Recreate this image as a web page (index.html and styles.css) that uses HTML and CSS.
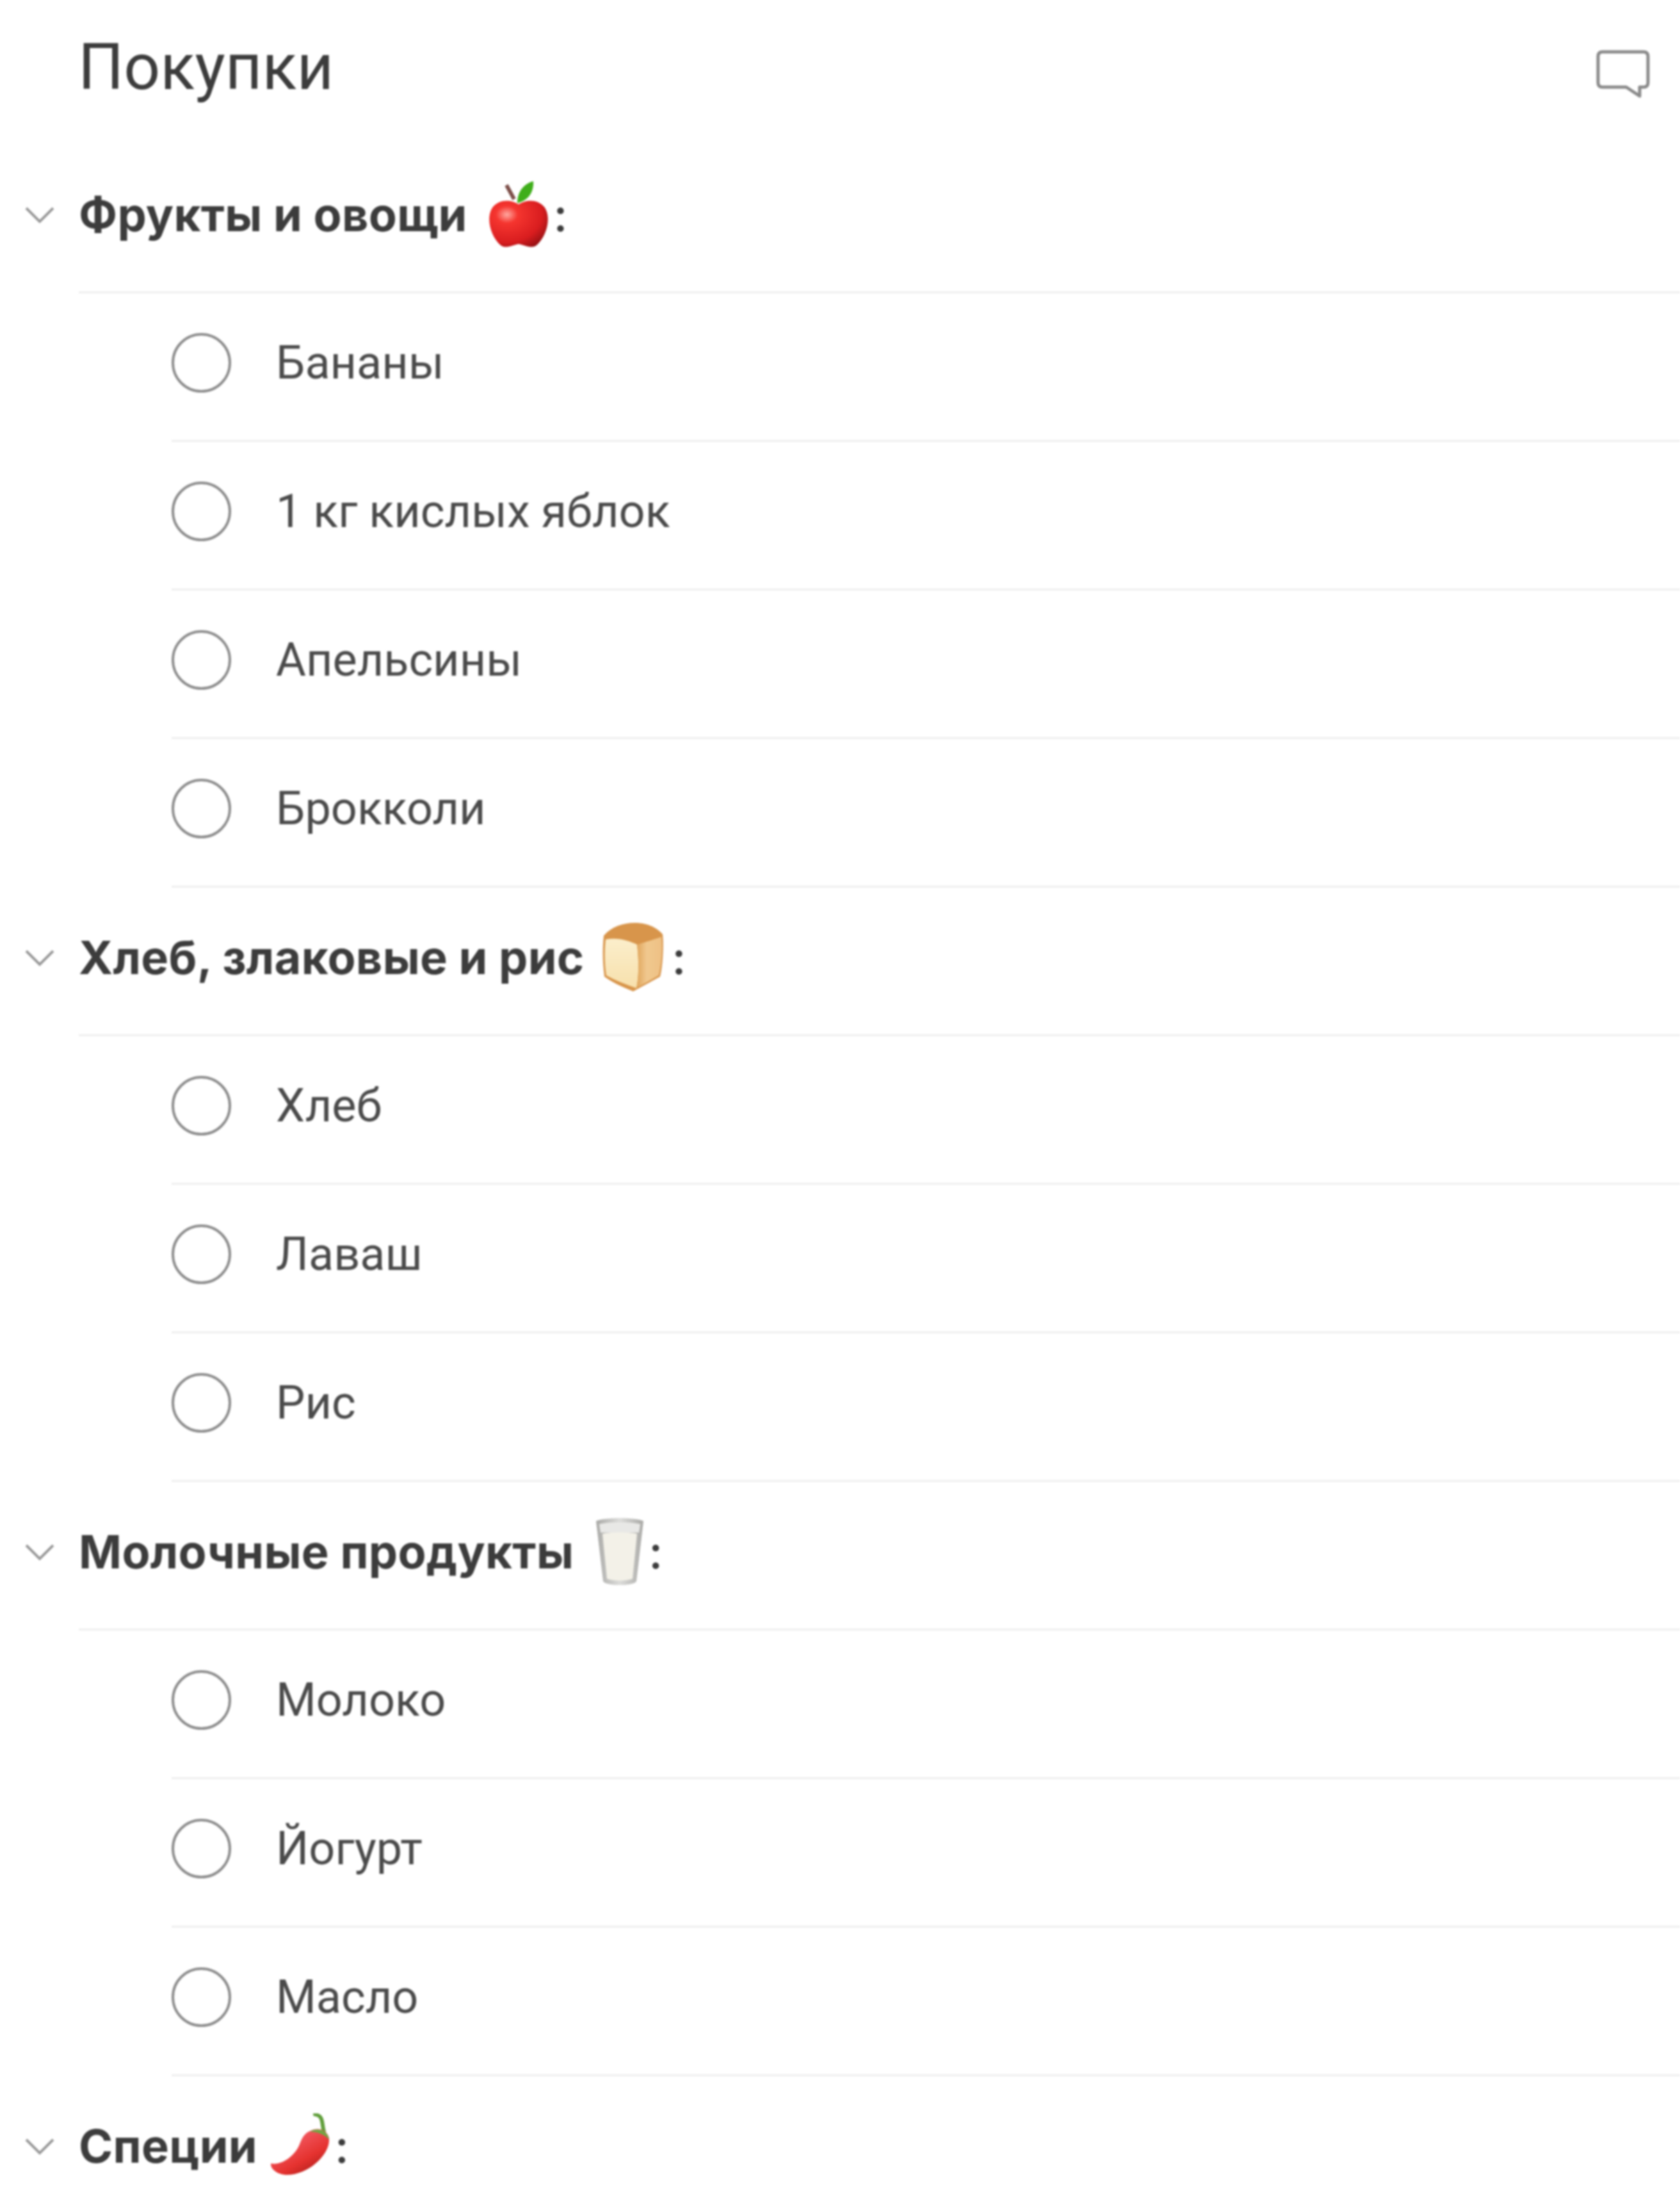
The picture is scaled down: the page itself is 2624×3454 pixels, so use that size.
FILE: index.html
```html
<!DOCTYPE html>
<html lang="ru">
<head>
<meta charset="utf-8">
<title>Покупки</title>
<link rel="stylesheet" href="styles.css">
</head>
<body>
<main class="page">
  <header class="top">
    <h1 class="title">Покупки</h1>
    <svg class="comment" viewBox="0 0 84 78"><path d="M10 3H74Q81 3 81 10V51Q81 58 74 58H68V72L47 58H10Q3 58 3 51V10Q3 3 10 3Z"/></svg>
  </header>

  <section>
    <div class="head">
      <svg class="chev" viewBox="0 0 48 28"><path d="M3 3L24 24L45 3"/></svg>
      <h2 class="head-text"><span class="head-name">Фрукты и овощи</span>
        <svg class="emoji apple" viewBox="0 0 96 108">
          <defs>
            <radialGradient id="ag" cx="0.3" cy="0.3" r="0.85"><stop offset="0" stop-color="#ffa8a0"/><stop offset="0.22" stop-color="#f5352f"/><stop offset="0.7" stop-color="#d91d1f"/><stop offset="1" stop-color="#8e0f12"/></radialGradient>
          </defs>
          <path d="M29 8L41 30" stroke="#7d4f49" stroke-width="6" fill="none"/>
          <path d="M46 36C46 18 56 6 71 2C72 18 64 32 46 36Z" fill="#3fae1a"/>
          <path d="M48 38C60 30 78 30 88 42C100 58 92 88 76 102C68 108 58 102 48 100C38 102 28 108 20 102C4 88 -4 58 8 42C18 30 36 30 48 38Z" fill="url(#ag)"/>
        </svg><span class="colon">:</span></h2>
    </div>
    <ul class="items">
      <li class="item"><span class="check"></span><span>Бананы</span></li>
      <li class="item"><span class="check"></span><span>1 кг кислых яблок</span></li>
      <li class="item"><span class="check"></span><span>Апельсины</span></li>
      <li class="item"><span class="check"></span><span>Брокколи</span></li>
    </ul>
  </section>

  <section>
    <div class="head">
      <svg class="chev" viewBox="0 0 48 28"><path d="M3 3L24 24L45 3"/></svg>
      <h2 class="head-text"><span class="head-name">Хлеб, злаковые и рис</span>
        <svg class="emoji bread" viewBox="0 0 96 108">
          <defs>
            <linearGradient id="bg1" x1="0" y1="0" x2="0" y2="1"><stop offset="0" stop-color="#fbeecb"/><stop offset="1" stop-color="#f7e0ac"/></linearGradient>
            <linearGradient id="bg2" x1="0" y1="0" x2="1" y2="0"><stop offset="0" stop-color="#dfa45a"/><stop offset="0.4" stop-color="#f0c88e"/><stop offset="1" stop-color="#eec084"/></linearGradient>
          </defs>
          <path d="M2 20C14 6 32 0 50 0C68 0 84 6 94 18C96 34 94 70 90 84L48 107C30 100 14 92 3 84C0 60 0 40 2 20Z" fill="#d8954b"/>
          <path d="M5 26C24 22 42 28 54 34C57 58 57 84 53 102C36 96 20 90 6 82C3 64 3 44 5 26Z" fill="url(#bg1)"/>
          <path d="M54 34C68 30 80 26 92 22C94 40 92 66 88 82L53 102C57 84 57 58 54 34Z" fill="url(#bg2)"/>
        </svg><span class="colon">:</span></h2>
    </div>
    <ul class="items">
      <li class="item"><span class="check"></span><span>Хлеб</span></li>
      <li class="item"><span class="check"></span><span>Лаваш</span></li>
      <li class="item"><span class="check"></span><span>Рис</span></li>
    </ul>
  </section>

  <section>
    <div class="head">
      <svg class="chev" viewBox="0 0 48 28"><path d="M3 3L24 24L45 3"/></svg>
      <h2 class="head-text"><span class="head-name">Молочные продукты</span>
        <svg class="emoji milk" viewBox="0 0 76 108">
          <defs>
            <linearGradient id="mg" x1="0" y1="0" x2="1" y2="0"><stop offset="0" stop-color="#a9a9a6"/><stop offset="0.5" stop-color="#dcdcda"/><stop offset="1" stop-color="#a9a9a6"/></linearGradient>
          </defs>
          <path d="M1 6C14 0 62 0 75 6L64 100C60 108 16 108 12 100Z" fill="url(#mg)"/>
          <path d="M6 11C20 7 56 7 70 11L68 24H8Z" fill="#e8e8e6"/>
          <path d="M11 26C24 23 52 23 65 26L58 96C50 100 26 100 18 96Z" fill="#f3f1e8"/>
        </svg><span class="colon">:</span></h2>
    </div>
    <ul class="items">
      <li class="item"><span class="check"></span><span>Молоко</span></li>
      <li class="item"><span class="check"></span><span>Йогурт</span></li>
      <li class="item"><span class="check"></span><span>Масло</span></li>
    </ul>
  </section>

  <section>
    <div class="head">
      <svg class="chev" viewBox="0 0 48 28"><path d="M3 3L24 24L45 3"/></svg>
      <h2 class="head-text"><span class="head-name">Специи</span>
        <svg class="emoji pepper" viewBox="0 0 94 108" preserveAspectRatio="none">
          <defs>
            <linearGradient id="pg" x1="0.2" y1="0.2" x2="0.8" y2="1"><stop offset="0" stop-color="#f4606a"/><stop offset="0.6" stop-color="#e5322f"/><stop offset="1" stop-color="#a81b17"/></linearGradient>
          </defs>
          <path d="M70 2C84 4 80 18 84 32" stroke="#5f9e3a" stroke-width="6" fill="none" stroke-linecap="round"/>
          <path d="M64 30C76 24 90 30 92 44C94 72 60 108 26 108C12 108 0 98 1 88C20 92 40 72 46 54C50 42 54 34 64 30Z" fill="url(#pg)"/>
          <path d="M62 32C74 24 90 30 92 46C84 36 72 32 62 32Z" fill="#6fa843"/>
        </svg><span class="colon">:</span></h2>
    </div>
  </section>
</main>
</body>
</html>
```

FILE: styles.css
```css
html, body {
  margin: 0;
  height: 3454px;
  overflow: hidden;
  background: #fff;
}
.page {
  width: 2624px;
  font-family: Roboto, "Noto Sans", sans-serif;
  color: #3c3c3c;
  filter: blur(1.4px);
}
.top {
  height: 226px;
  box-sizing: border-box;
  padding: 0 47px 16px 122px;
  display: flex;
  align-items: center;
  justify-content: space-between;
}
.title {
  margin: 0;
  font-size: 100px;
  font-weight: 400;
  line-height: 1;
}
.comment {
  width: 84px;
  height: 78px;
  margin-top: 24px;
  fill: none;
  stroke: #8a8a8a;
  stroke-width: 5;
  stroke-linejoin: round;
}
.head {
  height: 232px;
  display: flex;
  align-items: stretch;
}
.chev {
  flex: 0 0 auto;
  width: 48px;
  height: 28px;
  margin: 96px 37px 0 38px;
  fill: none;
  stroke: #989898;
  stroke-width: 4;
}
.head-text {
  flex: 1;
  margin: 0;
  padding-bottom: 12px;
  display: flex;
  align-items: center;
  font-family: Inter, Roboto, sans-serif;
  font-size: 72px;
  letter-spacing: 0.3px;
  font-weight: 700;
  border-bottom: 3px solid #eeeeee;
  box-sizing: border-box;
  line-height: 1;
}
.emoji { flex: 0 0 auto; }
.colon {
  margin-left: 7px;
  font-weight: 500;
}
.apple { width: 96px; height: 108px; margin-left: 32px; }
.bread { width: 96px; height: 108px; margin: 0 6px 0 28px; }
.milk { width: 76px; height: 108px; margin-left: 34px; }
.pepper { width: 94px; height: 96px; margin: -6px 0 0 20px; }
.items {
  list-style: none;
  margin: 0;
  padding: 0;
}
.item {
  height: 232px;
  box-sizing: border-box;
  margin-left: 268px;
  padding-bottom: 12px;
  display: flex;
  align-items: center;
  gap: 70px;
  font-size: 72px;
  border-bottom: 3px solid #eeeeee;
  color: #4a4a4a;
}
.check {
  width: 93px;
  height: 93px;
  box-sizing: border-box;
  border: 4px solid #8c8c8c;
  border-radius: 50%;
}
```
